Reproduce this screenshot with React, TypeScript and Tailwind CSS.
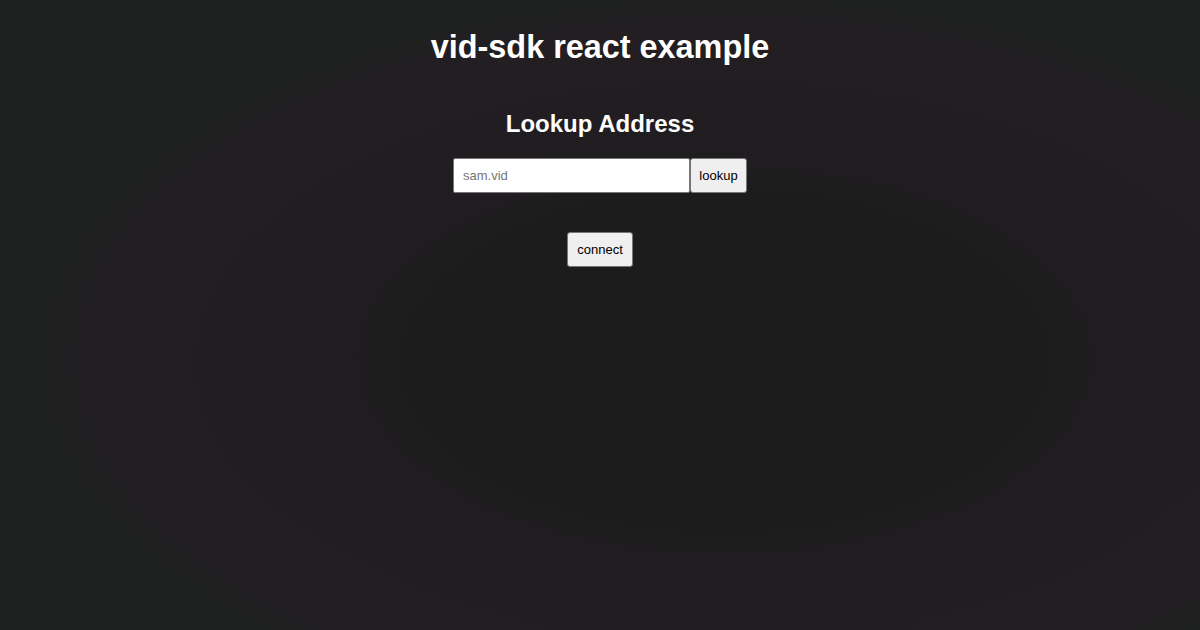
export default function App() {
  return (
    <div
      className="min-h-[630px] w-full flex flex-col items-center text-white"
      style={{
        fontFamily: '"Liberation Sans", Arial, sans-serif',
        background:
          'radial-gradient(ellipse 680px 360px at 725px 360px, #1c1c1c 0%, #1c1c1c 46%, #201d20 58%, #221e22 92%, #1f2020 100%)',
      }}
    >
      <h1 className="mt-[29px] text-[32.4px] font-bold leading-[37px]">vid-sdk react example</h1>
      <h2 className="mt-[44px] text-[24px] font-bold leading-[28px]">Lookup Address</h2>
      <div className="mt-[20px] flex">
        <input
          placeholder="sam.vid"
          className="h-[35px] w-[237px] bg-white border border-[#767676] rounded-[2px] px-[9px] text-[13px] text-black placeholder:text-[#757575] outline-none"
        />
        <button className="h-[35px] w-[57px] bg-[#efefef] border border-[#767676] rounded-[3px] text-[13px] text-black">
          lookup
        </button>
      </div>
      <button className="mt-[39px] h-[35px] px-[9px] bg-[#efefef] border border-[#767676] rounded-[3px] text-[13px] text-black">
        connect
      </button>
    </div>
  );
}
